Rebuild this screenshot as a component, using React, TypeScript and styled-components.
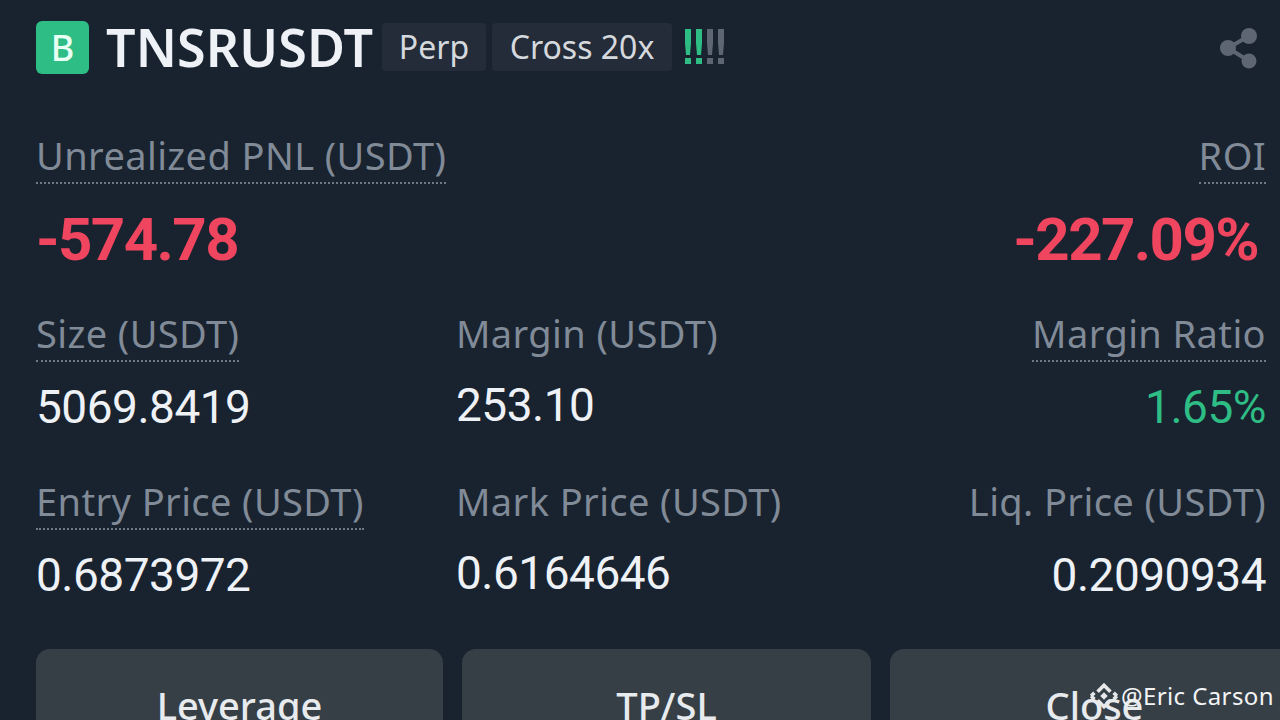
import styled, { createGlobalStyle } from "styled-components";

const GlobalStyle = createGlobalStyle`
  html, body {
    margin: 0;
    padding: 0;
    background: #18232f;
  }
`

const Page = styled.div`
  position: relative;
  width: 1280px;
  height: 720px;
  overflow: hidden;
  background: #18232f;
  font-family: "Noto Sans", "Liberation Sans", sans-serif;
  box-sizing: border-box;
  padding: 20px 14px 0 36px;
`

const Header = styled.div`
  display: flex;
  align-items: center;
  height: 54px;
`

const CoinBadge = styled.div`
  width: 53px;
  height: 53px;
  border-radius: 6px;
  background: #2ebd85;
  color: #e8fff4;
  font-size: 36px;
  font-weight: 500;
  display: flex;
  align-items: center;
  justify-content: center;
`

const Symbol = styled.div`
  margin-left: 17px;
  font-size: 52px;
  font-weight: 600;
  line-height: 54px;
  color: #eef1f5;
  letter-spacing: 0.1px;
  width: 276px;
  white-space: nowrap;
`

const Tag = styled.div<{ $width: number }>`
  width: ${({ $width }) => $width}px;
  height: 48px;
  margin-right: 6px;
  border-radius: 4px;
  background: #232c38;
  color: #d5d9de;
  font-size: 32px;
  line-height: 48px;
  text-align: center;
  white-space: nowrap;
`

const Risk = styled.svg`
  margin-left: 6px;
`

const ShareButton = styled.svg`
  margin-left: auto;
  margin-right: 3px;
`

const MetricRow = styled.div<{ $top: number }>`
  display: grid;
  grid-template-columns: 420px 1fr auto;
  margin-top: ${({ $top }) => $top}px;
`

const Metric = styled.div<{ $end?: boolean }>`
  display: flex;
  flex-direction: column;
  align-items: ${({ $end }) => ($end ? "flex-end" : "flex-start")};
`

const Label = styled.div<{ $dashed?: boolean }>`
  font-size: 38px;
  line-height: 46px;
  padding-bottom: 4px;
  letter-spacing: 0.4px;
  color: #818a97;
  white-space: nowrap;
  border-bottom: 2px dotted ${({ $dashed }) => ($dashed ? "#6f7885" : "transparent")};
`

const Loss = styled.div<{ $inset?: boolean }>`
  margin-top: 24px;
  margin-right: ${({ $inset }) => ($inset ? 8 : 0)}px;
  font-family: "Roboto", "Liberation Sans", sans-serif;
  font-size: 60px;
  line-height: 64px;
  font-weight: 700;
  letter-spacing: -1.6px;
  color: #f0455f;
`

const Value = styled.div<{ $green?: boolean; $raised?: boolean }>`
  margin-top: ${({ $raised }) => ($raised ? 17 : 19)}px;
  font-family: "Roboto", "Liberation Sans", sans-serif;
  font-size: 46px;
  line-height: 52px;
  letter-spacing: -0.5px;
  color: ${({ $green }) => ($green ? "#2ebd85" : "#eef1f5")};
`

const Actions = styled.div`
  display: flex;
  gap: 19px;
  margin-top: 48px;
  margin-right: -200px;
`

const ActionButton = styled.div<{ $width: number }>`
  flex: none;
  width: ${({ $width }) => $width}px;
  height: 110px;
  border-radius: 14px;
  background: #363f46;
  color: #e8ebee;
  font-size: 38px;
  font-weight: 500;
  padding-top: 30px;
  box-sizing: border-box;
  text-align: center;
`

const Watermark = styled.div`
  position: absolute;
  left: 1089px;
  top: 680px;
  display: flex;
  align-items: center;
  gap: 2px;
  color: #f2f4f6;
  font-size: 24px;
  line-height: 32px;
  letter-spacing: 0.4px;
  white-space: nowrap;
`

function RiskBars() {
  const bars = [
    { x: 1, color: "#2ebd85" },
    { x: 12, color: "#2ebd85" },
    { x: 23, color: "#5e6673" },
    { x: 34, color: "#5e6673" },
  ]
  return (
    <Risk width="42" height="40" viewBox="0 0 42 40">
      {bars.map((b) => (
        <g key={b.x} fill={b.color}>
          <path d={`M${b.x} 2h6v14l-1 12h-4l-1-12z`} />
          <rect x={b.x} y="31" width="6" height="6" />
        </g>
      ))}
    </Risk>
  )
}

function ShareIcon() {
  return (
    <ShareButton width="44" height="44" viewBox="0 0 44 44" fill="#5e6673">
      <circle cx="9" cy="23" r="8" />
      <circle cx="30" cy="11" r="8" />
      <circle cx="30" cy="36" r="7.5" />
      <path d="M9 23 30 11M9 23 30 36" stroke="#5e6673" strokeWidth="4" />
    </ShareButton>
  )
}

function BinanceMark() {
  return (
    <svg width="30" height="30" viewBox="0 0 28 28" fill="none" stroke="#e6e8ea" strokeWidth="3.4">
      <path d="M8 10 14 4 20 10" />
      <path d="M8 18 14 24 20 18" />
      <path d="M2 14 5 11M2 14 5 17M26 14 23 11M26 14 23 17" />
      <path d="M14 10.5 17.5 14 14 17.5 10.5 14Z" fill="#e6e8ea" stroke="none" />
    </svg>
  )
}

export default function App() {
  return (
    <Page>
      <GlobalStyle />
      <Header>
        <CoinBadge>B</CoinBadge>
        <Symbol>TNSRUSDT</Symbol>
        <Tag $width={104}>Perp</Tag>
        <Tag $width={180}>Cross 20x</Tag>
        <RiskBars />
        <ShareIcon />
      </Header>

      <MetricRow $top={58}>
        <Metric>
          <Label $dashed>Unrealized PNL (USDT)</Label>
          <Loss>-574.78</Loss>
        </Metric>
        <div />
        <Metric $end>
          <Label $dashed>ROI</Label>
          <Loss $inset>-227.09%</Loss>
        </Metric>
      </MetricRow>

      <MetricRow $top={38}>
        <Metric>
          <Label $dashed>Size (USDT)</Label>
          <Value>5069.8419</Value>
        </Metric>
        <Metric>
          <Label>Margin (USDT)</Label>
          <Value $raised>253.10</Value>
        </Metric>
        <Metric $end>
          <Label $dashed>Margin Ratio</Label>
          <Value $green>1.65%</Value>
        </Metric>
      </MetricRow>

      <MetricRow $top={45}>
        <Metric>
          <Label $dashed>Entry Price (USDT)</Label>
          <Value>0.6873972</Value>
        </Metric>
        <Metric>
          <Label>Mark Price (USDT)</Label>
          <Value $raised>0.6164646</Value>
        </Metric>
        <Metric $end>
          <Label>Liq. Price (USDT)</Label>
          <Value>0.2090934</Value>
        </Metric>
      </MetricRow>

      <Actions>
        <ActionButton $width={407}>Leverage</ActionButton>
        <ActionButton $width={409}>TP/SL</ActionButton>
        <ActionButton $width={409}>Close</ActionButton>
      </Actions>

      <Watermark>
        <BinanceMark />
        @Eric Carson
      </Watermark>
    </Page>
  )
}
